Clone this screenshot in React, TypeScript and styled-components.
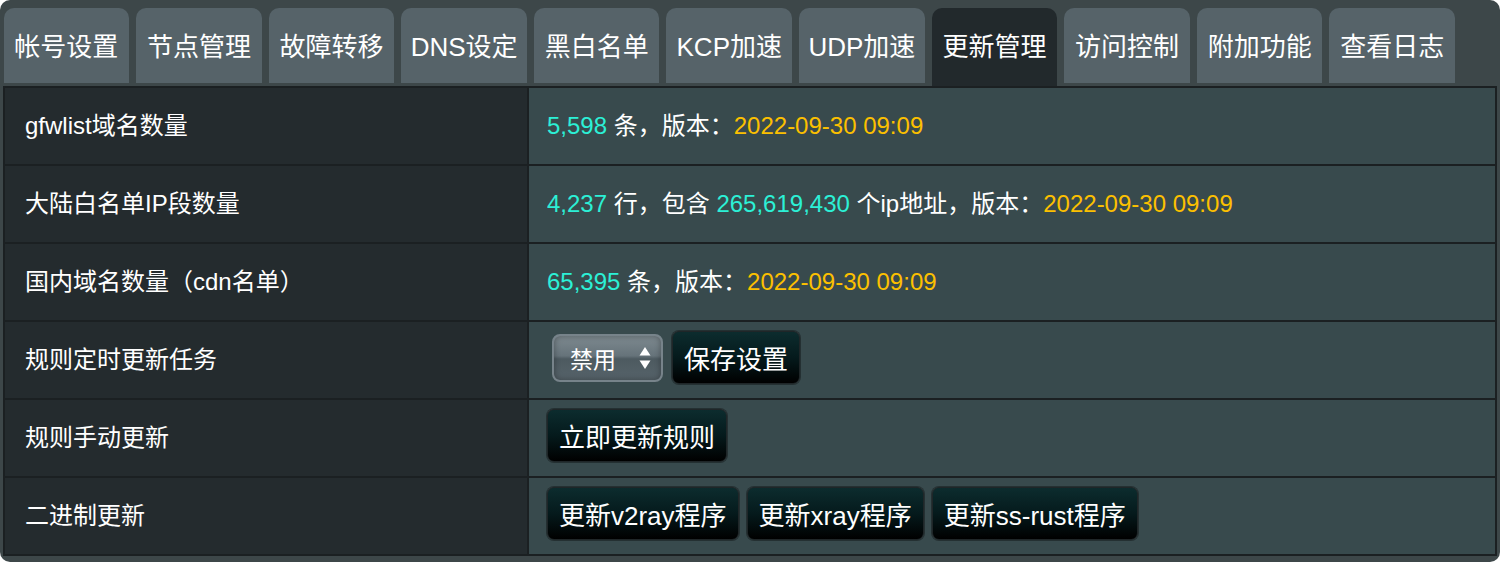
import React from "react";
import styled, { createGlobalStyle } from "styled-components";

const TABS = [
  "帐号设置",
  "节点管理",
  "故障转移",
  "DNS设定",
  "黑白名单",
  "KCP加速",
  "UDP加速",
  "更新管理",
  "访问控制",
  "附加功能",
  "查看日志",
];

const ACTIVE_TAB = "更新管理";

const GlobalStyle = createGlobalStyle`
  html, body {
    margin: 0;
    padding: 0;
    background: #ffffff;
  }
  body {
    font-family: "Liberation Sans", "Noto Sans CJK SC", sans-serif;
  }
`;

export default function App() {
  return (
    <>
      <GlobalStyle />
      <Panel>
        <TabBar>
          {TABS.map((name) => (
            <Tab key={name} $active={name === ACTIVE_TAB}>
              {name}
            </Tab>
          ))}
        </TabBar>
        <Table>
          <tbody>
            <Row>
              <LabelCell>gfwlist域名数量</LabelCell>
              <ValueCell>
                <Count>5,598</Count> 条，版本：<Version>2022-09-30 09:09</Version>
              </ValueCell>
            </Row>
            <Row>
              <LabelCell>大陆白名单IP段数量</LabelCell>
              <ValueCell>
                <Count>4,237</Count> 行，包含 <Count>265,619,430</Count> 个ip地址，版本：
                <Version>2022-09-30 09:09</Version>
              </ValueCell>
            </Row>
            <Row>
              <LabelCell>国内域名数量（cdn名单）</LabelCell>
              <ValueCell>
                <Count>65,395</Count> 条，版本：<Version>2022-09-30 09:09</Version>
              </ValueCell>
            </Row>
            <Row>
              <LabelCell>规则定时更新任务</LabelCell>
              <ValueCell>
                <Controls>
                  <SelectBox>
                    <span>禁用</span>
                    <svg width="12" height="26" viewBox="0 0 12 26">
                      <polygon points="6,2 11.5,10.5 0.5,10.5" fill="#ffffff" />
                      <polygon points="0.5,15.5 11.5,15.5 6,24" fill="#ffffff" />
                    </svg>
                  </SelectBox>
                  <Button>保存设置</Button>
                </Controls>
              </ValueCell>
            </Row>
            <Row>
              <LabelCell>规则手动更新</LabelCell>
              <ValueCell>
                <Controls>
                  <Button>立即更新规则</Button>
                </Controls>
              </ValueCell>
            </Row>
            <Row>
              <LabelCell>二进制更新</LabelCell>
              <ValueCell>
                <Controls>
                  <Button>更新v2ray程序</Button>
                  <Button>更新xray程序</Button>
                  <Button>更新ss-rust程序</Button>
                </Controls>
              </ValueCell>
            </Row>
          </tbody>
        </Table>
      </Panel>
    </>
  );
}

const Panel = styled.div`
  width: 1500px;
  height: 562px;
  box-sizing: border-box;
  padding: 8px 3px 6px 3px;
  background: #3d4749;
  border-radius: 10px;
  display: flex;
  flex-direction: column;
`;

const TabBar = styled.div`
  display: flex;
  align-items: flex-start;
  gap: 7px;
  height: 78px;
  padding-left: 0.5px;
`;

const Tab = styled.div<{ $active?: boolean }>`
  width: 125.6px;
  height: ${(p) => (p.$active ? "78px" : "75px")};
  box-sizing: border-box;
  padding-bottom: ${(p) => (p.$active ? "5px" : "2px")};
  display: flex;
  align-items: center;
  justify-content: center;
  background: ${(p) => (p.$active ? "#22292c" : "#566369")};
  border-radius: 10px 10px 0 0;
  color: #ffffff;
  font-size: 26px;
  white-space: nowrap;
`;

const Table = styled.table`
  width: 100%;
  border-collapse: collapse;
  border: 2px solid #1b2022;
  table-layout: fixed;
`;

const Row = styled.tr`
  height: 78px;
`;

const LabelCell = styled.th`
  width: 524px;
  box-sizing: border-box;
  padding: 0 20px 5px 20px;
  text-align: left;
  font-weight: normal;
  font-size: 24px;
  color: #ffffff;
  background: #242b2e;
  border: 2px solid #1b2022;
`;

const ValueCell = styled.td`
  padding: 0 18px 5px 18px;
  font-size: 24px;
  color: #ffffff;
  background: #384a4d;
  border: 2px solid #1b2022;
  white-space: nowrap;
`;

const Count = styled.span`
  color: #2cf0d6;
`;

const Version = styled.span`
  color: #fcc000;
`;

const Controls = styled.div`
  display: flex;
  align-items: center;
  gap: 8px;
`;

const SelectBox = styled.div`
  width: 111px;
  height: 48px;
  box-sizing: border-box;
  margin-left: 5px;
  margin-right: 1px;
  padding: 0 10px 0 16px;
  display: flex;
  align-items: center;
  justify-content: space-between;
  border: 2px solid #77838a;
  border-radius: 8px;
  background: linear-gradient(
    to bottom,
    #7e8a90 0%,
    #66737a 45%,
    #4d5a60 52%,
    #56636a 100%
  );
  box-shadow: inset 0 0 6px rgba(0, 0, 0, 0.35);
  color: #ffffff;
  font-size: 23px;
`;

const Button = styled.button`
  height: 53px;
  box-sizing: border-box;
  padding: 0 11px;
  border: 1px solid #1f2628;
  border-radius: 7px;
  background: linear-gradient(to bottom, #0c2c2e 0%, #051a1c 50%, #000000 100%);
  box-shadow: 0 0 0 1px rgba(0, 0, 0, 0.35);
  color: #ffffff;
  font-family: "Liberation Sans", "Noto Sans CJK SC", sans-serif;
  font-size: 26px;
  white-space: nowrap;
  cursor: pointer;
`;
